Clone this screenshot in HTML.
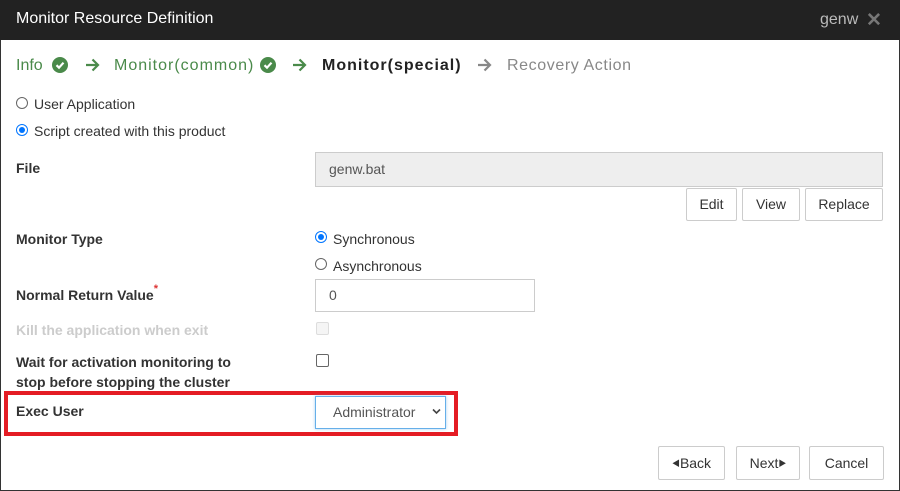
<!DOCTYPE html>
<html><head><style>
*{box-sizing:border-box;margin:0;padding:0}
body{width:900px;height:491px;background:#fff;font-family:"Liberation Sans","Noto Sans CJK JP",sans-serif;position:relative;overflow:hidden;color:#333;font-size:14px}
.a{position:absolute;white-space:nowrap}
.hdr{left:0;top:0;width:900px;height:40px;background:#222}
.frame{left:0;top:40px;width:900px;height:451px;border:1px solid #333;border-top:none}
.b{font-weight:bold;color:#333}
.btn{position:absolute;border:1px solid #ccc;border-radius:2px;background:#fff;text-align:center;font-size:14px;color:#333}
.radio{position:absolute;width:12px;height:12px;border:1px solid #666;border-radius:50%;background:#fff}
.radio.on{border-color:#0075ff}
.radio.on::after{content:"";position:absolute;left:2px;top:2px;width:6px;height:6px;border-radius:50%;background:#0075ff}
.chk{position:absolute;width:13px;height:13px;border:1px solid #666;border-radius:2px;background:#fff}
</style></head><body>
<div class="a hdr"></div>
<div class="a" style="left:16px;top:10px;font-size:16px;color:#fff">Monitor Resource Definition</div>
<div class="a" style="left:820px;top:11px;font-size:16px;color:#bbb">genw</div>
<div class="a" style="left:866px;top:9px;font-size:19px;color:#777;font-weight:bold">✕</div>
<div class="a frame"></div>

<div class="a" style="left:16px;top:57px;font-size:16px;color:#4a8a4a">Info</div>
<svg class="a" style="left:52px;top:57px" width="16" height="16"><circle cx="8" cy="8" r="8" fill="#4a8a4a"/><path d="M4.5 8.2l2.5 2.5 4.5-5" stroke="#fff" stroke-width="2.2" fill="none"/></svg>
<svg class="a" style="left:85px;top:58px" width="15" height="14"><path d="M1 7h12M7.5 1.5L13 7l-5.5 5.5" stroke="#4a8a4a" stroke-width="2.2" fill="none"/></svg>
<div class="a" style="left:114px;top:57px;font-size:16px;color:#4a8a4a;letter-spacing:1px">Monitor(common)</div>
<svg class="a" style="left:260px;top:57px" width="16" height="16"><circle cx="8" cy="8" r="8" fill="#4a8a4a"/><path d="M4.5 8.2l2.5 2.5 4.5-5" stroke="#fff" stroke-width="2.2" fill="none"/></svg>
<svg class="a" style="left:292px;top:58px" width="15" height="14"><path d="M1 7h12M7.5 1.5L13 7l-5.5 5.5" stroke="#4a8a4a" stroke-width="2.2" fill="none"/></svg>
<div class="a" style="left:322px;top:57px;font-size:16px;font-weight:bold;color:#222;letter-spacing:1px">Monitor(special)</div>
<svg class="a" style="left:477px;top:58px" width="15" height="14"><path d="M1 7h12M7.5 1.5L13 7l-5.5 5.5" stroke="#888" stroke-width="2.2" fill="none"/></svg>
<div class="a" style="left:507px;top:57px;font-size:16px;color:#888;letter-spacing:0.6px">Recovery Action</div>

<div class="radio" style="left:16px;top:97px"></div>
<div class="a" style="left:34px;top:96px">User Application</div>
<div class="radio on" style="left:16px;top:124px"></div>
<div class="a" style="left:34px;top:123px">Script created with this product</div>

<div class="a b" style="left:16px;top:160px">File</div>
<div class="a" style="left:315px;top:152px;width:568px;height:35px;background:#eee;border:1px solid #ccc;padding:8px 13px;color:#555">genw.bat</div>
<div class="btn" style="left:686px;top:188px;width:51px;height:33px;line-height:31px">Edit</div>
<div class="btn" style="left:742px;top:188px;width:58px;height:33px;line-height:31px">View</div>
<div class="btn" style="left:805px;top:188px;width:78px;height:33px;line-height:31px">Replace</div>

<div class="a b" style="left:16px;top:231px">Monitor Type</div>
<div class="radio on" style="left:315px;top:231px"></div>
<div class="a" style="left:333px;top:231px">Synchronous</div>
<div class="radio" style="left:315px;top:258px"></div>
<div class="a" style="left:333px;top:258px">Asynchronous</div>

<div class="a b" style="left:16px;top:287px">Normal Return Value<span style="color:#d33;font-size:11px;vertical-align:top;position:relative;top:-4px">*</span></div>
<div class="a" style="left:315px;top:279px;width:220px;height:33px;border:1px solid #ccc;padding:7px 13px;color:#555">0</div>

<div class="a" style="left:16px;top:322px;font-weight:bold;color:#ccc">Kill the application when exit</div>
<div class="chk" style="left:316px;top:322px;border-color:#ddd;background:#f5f5f5"></div>

<div class="a b" style="left:16px;top:352px;line-height:20px">Wait for activation monitoring to<br>stop before stopping the cluster</div>
<div class="chk" style="left:316px;top:354px"></div>

<div class="a" style="left:4px;top:391px;width:454px;height:45px;border:4px solid #e41c24"></div>
<div class="a b" style="left:16px;top:403px">Exec User</div>
<div class="a" style="left:315px;top:396px;width:131px;height:33px;border:1px solid #66afe9;box-shadow:0 0 3px rgba(102,175,233,.6);padding:7px 0 0 17px;color:#555">Administrator</div>
<svg class="a" style="left:432px;top:408px" width="9" height="7"><path d="M1 1.5l3.5 3.5 3.5-3.5" stroke="#444" stroke-width="1.6" fill="none"/></svg>

<div class="btn" style="left:658px;top:446px;width:67px;height:34px;line-height:32px"><span style="font-size:8px;vertical-align:2px">◀</span>Back</div>
<div class="btn" style="left:736px;top:446px;width:64px;height:34px;line-height:32px">Next<span style="font-size:8px;vertical-align:2px">▶</span></div>
<div class="btn" style="left:809px;top:446px;width:75px;height:34px;line-height:32px">Cancel</div>
</body></html>
